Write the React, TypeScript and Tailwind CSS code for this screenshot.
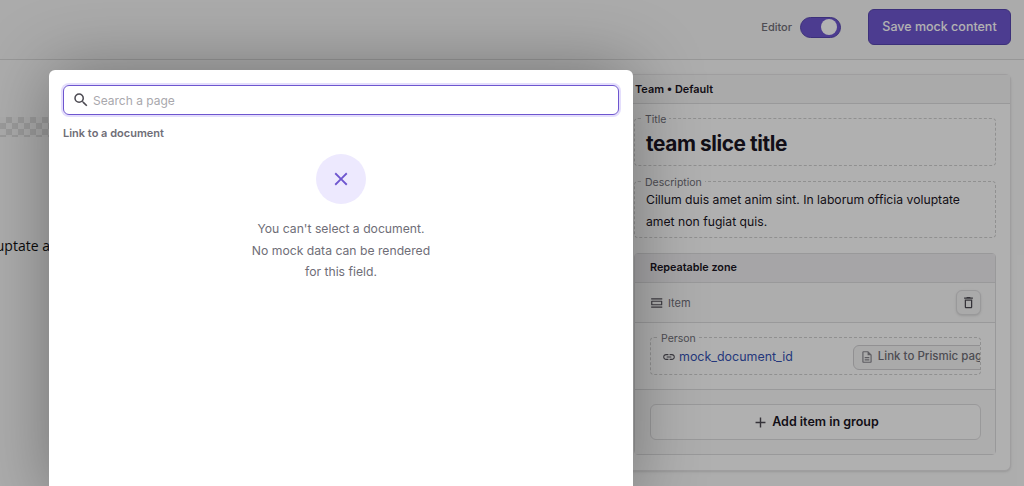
import {
  MdAdd,
  MdClose,
  MdLink,
  MdOutlineDelete,
  MdOutlineDescription,
  MdOutlineViewDay,
  MdSearch,
} from "react-icons/md";

// Dashed box with its label sitting on the top border
const MockField = ({
  label,
  className,
  children,
}: {
  label: string;
  className: string;
  children: React.ReactNode;
}) => (
  <div className={`relative rounded border border-dashed border-[#cfcfcf] ${className}`}>
    <span className="absolute left-[7px] top-[-6px] bg-[#fcfcfc] px-[3px] text-[10.5px] leading-[14px] text-[#6f6e77]">
      {label}
    </span>
    {children}
  </div>
);

const SidePanel = () => (
  <div className="mt-[14px] flex h-[397px] w-[392px] flex-col rounded-md border border-[#e4e2e4] bg-[#fdfdfd] shadow-sm">
    <div className="flex h-[29px] shrink-0 items-center border-b border-[#dcdbdd] bg-[#f4f4f4] pl-[15px] pt-[1px] text-[10.9px] font-semibold text-[#1a1523]">
      Team • Default
    </div>
    <div className="flex flex-col gap-[15px] px-[14px] pb-[15px] pt-[14px]">
      <MockField label="Title" className="h-[48px] pl-[11px] pt-[12px]">
        <div className="text-[20.8px] font-bold leading-[26px] tracking-[-0.4px] text-[#1a1523]">team slice title</div>
      </MockField>
      <MockField label="Description" className="h-[57px] pl-[11px] pt-[7px]">
        <div className="text-[12.2px] leading-[21.5px] text-[#1a1523]">
          Cillum duis amet anim sint. In laborum officia voluptate
          <br />
          amet non fugiat quis.
        </div>
      </MockField>
      <div className="flex h-[202px] flex-col rounded border border-[#dcdbdd]">
        <div className="flex h-[29px] shrink-0 items-center border-b border-[#dcdbdd] bg-[#eeedef] pl-[15px] pt-[1px] text-[10.8px] font-semibold text-[#1a1523]">
          Repeatable zone
        </div>
        <div className="flex h-[40px] shrink-0 items-center justify-between border-b border-[#dcdbdd] bg-[#f8f8f8] pl-[15px] pr-[14px]">
          <div className="flex items-center gap-[4px] pt-[1px] text-[11px] text-[#6f6e77]">
            <MdOutlineViewDay className="size-[14px] text-[#55535c]" />
            Item
          </div>
          <div className="flex size-[25px] items-center justify-center rounded-md border border-[#dcdbdd] bg-[#f4f4f4] shadow-sm">
            <MdOutlineDelete className="size-[15px] text-[#4c4a52]" />
          </div>
        </div>
        <div className="flex h-[67px] shrink-0 flex-col border-b border-[#dcdbdd] pl-[15px] pr-[14px] pt-[14px]">
          <MockField label="Person" className="h-[38px]">
            <div className="flex h-full items-center overflow-hidden pl-[11px] pt-[2px]">
              <MdLink className="size-[14px] shrink-0 text-[#55535c]" />
              <span className="ml-[3px] text-[12.45px] whitespace-nowrap text-[#3451b2]">mock_document_id</span>
              <div className="ml-[60px] flex h-[25px] w-[145px] shrink-0 items-center gap-[4px] rounded-md border border-[#d0cfd2] bg-[#f4f4f4] pl-[6px] text-[11.5px] font-medium whitespace-nowrap text-[#6f6e77]">
                <MdOutlineDescription className="size-[14px] shrink-0 text-[#86858c]" />
                Link to Prismic page
              </div>
            </div>
          </MockField>
        </div>
        <div className="flex flex-1 items-center bg-[#f8f8f8] pl-[15px] pr-[14px]">
          <div className="flex h-[36px] w-full items-center justify-center gap-[3px] rounded-md border border-[#dcdbdd] bg-[#fdfdfd] pt-[1px] text-[12.5px] font-semibold text-[#1a1523]">
            <MdAdd className="size-[17px] text-[#4c4a52]" />
            Add item in group
          </div>
        </div>
      </div>
    </div>
  </div>
);

const LinkDocumentModal = () => (
  <div className="absolute left-[49px] top-[70px] flex h-[430px] w-[584px] flex-col rounded-t-md bg-white px-[14px] pt-[15px] shadow-[0_0_70px_rgba(0,0,0,0.35)]">
    <div className="flex h-[30px] items-center gap-[3px] rounded-md border border-[#6e56cf] pl-[8px] shadow-[0_0_0_2px_#e4defc]">
      <MdSearch className="size-[18px] text-[#4c4a52]" />
      <span className="pt-[1px] text-[12px] text-[#a9a8ad]">Search a page</span>
    </div>
    <div className="mt-[11px] text-[11px] font-semibold leading-[14px] text-[#6f6e77]">Link to a document</div>
    <div className="mt-[14px] flex flex-col items-center">
      <div className="flex size-[50px] items-center justify-center rounded-full bg-[#ede9fe]">
        <MdClose className="size-[22px] text-[#6e56cf]" />
      </div>
      <p className="mt-[14px] text-center text-[12.2px] leading-[21.5px] text-[#6f6e77]">
        You can't select a document.
        <br />
        No mock data can be rendered
        <br />
        for this field.
      </p>
    </div>
  </div>
);

const App = () => {
  return (
    <div className="relative h-[486px] w-[1024px] overflow-hidden bg-[#f8f8f8] font-['Inter',sans-serif]">
      <header className="flex h-[60px] items-center justify-end border-b border-[#d8d8d8] bg-[#f5f5f5] pb-[5px] pr-[13px]">
        <span className="text-[11px] font-medium text-[#6f6e77]">Editor</span>
        <div className="ml-[8px] flex h-[21px] w-[41px] items-center justify-end rounded-full border border-[#5746af] bg-[#6e56cf] pr-[3px]">
          <div className="size-[16px] rounded-full bg-white" />
        </div>
        <button className="ml-[27px] h-[36px] w-[143px] rounded-md border border-[#5746af] bg-[#6e56cf] pt-[1px] text-[12.5px] font-medium text-white">
          Save mock content
        </button>
      </header>
      <main className="flex">
        <div className="min-w-0 flex-1 overflow-hidden pt-[57px]">
          <div className="h-[20px] bg-[repeating-conic-gradient(#dedede_0_25%,#f5f5f5_0_50%)] bg-[length:12px_12px]" />
          <p className="-ml-[322px] mt-[99px] font-['Open_Sans',sans-serif] text-[14px] leading-[20px] whitespace-nowrap text-[#111]">
            Cillum duis amet anim sint. In laborum officia voluptate amet non fugiat quis.
          </p>
        </div>
        <div className="w-[405px] shrink-0">
          <SidePanel />
        </div>
      </main>
      <div className="absolute inset-0 bg-black/30" />
      <LinkDocumentModal />
    </div>
  );
};

export default App;
